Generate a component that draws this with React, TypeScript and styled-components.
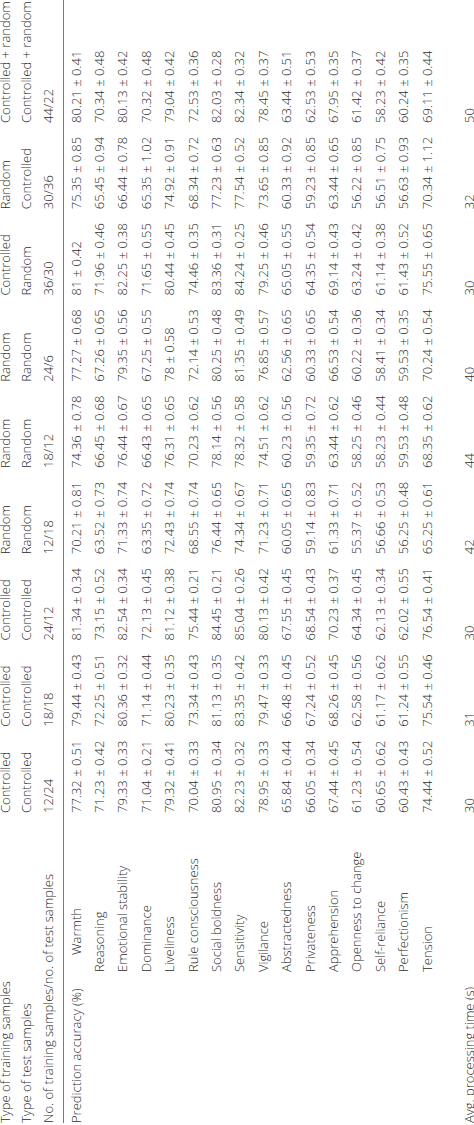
import React from "react";
import styled, { createGlobalStyle } from "styled-components";

const Global = createGlobalStyle`
  html, body { margin: 0; padding: 0; background: #ffffff; }
  #root { width: 474px; height: 1125px; }
`;

const Stage = styled.div`
  position: relative;
  width: 474px;
  height: 1125px;
  overflow: hidden;
  background: #ffffff;
`;

/* The table is printed sideways: the sheet is laid out normally, then turned a quarter left. */
const Sheet = styled.div`
  position: absolute;
  left: 0;
  top: 0;
  width: 1240px;
  transform-origin: 0 0;
  transform: translate(-6px, 1125px) rotate(-90deg);
  padding-left: 2px;
  font-family: "Open Sans", "Liberation Sans", sans-serif;
  font-weight: 300;
  font-size: 13px;
  color: #2b2b2b;
  white-space: nowrap;
`;

const COLS = "151px 159px repeat(9, 86.25px)";

const HeadRow = styled.div`
  display: grid;
  grid-template-columns: ${COLS};
  height: 21.5px;
  align-items: center;
`;

const HeadBlock = styled.div`
  padding-bottom: 4.5px;
  border-bottom: 1px solid #7a7a7a;
`;

const BodyRow = styled.div<{ $gap?: number }>`
  display: grid;
  grid-template-columns: ${COLS};
  height: 23.4px;
  align-items: center;
  margin-top: ${(p) => p.$gap ?? 0}px;
`;

const Span = styled.div`
  grid-column: 1 / span 2;
`;

const Group = styled.div``;

const Trait = styled.div<{ $shift?: number }>`
  padding-left: ${(p) => p.$shift ?? 0}px;
`;

const Cell = styled.div``;

type Col = { train: string; test: string; n: string; vals: string[]; time: string };

const raw: [string, string, string, string, string][] = [
  ["Controlled", "Controlled", "12/24", "77.32 0.51|71.23 0.42|79.33 0.33|71.04 0.21|79.32 0.41|70.04 0.33|80.95 0.34|82.23 0.32|78.95 0.33|65.84 0.44|66.05 0.34|67.44 0.45|61.23 0.54|60.65 0.62|60.43 0.43|74.44 0.52", "30"],
  ["Controlled", "Controlled", "18/18", "79.44 0.43|72.25 0.51|80.36 0.32|71.14 0.44|80.23 0.35|73.34 0.43|81.13 0.35|83.35 0.42|79.47 0.33|66.48 0.45|67.24 0.52|68.26 0.45|62.58 0.56|61.17 0.62|61.24 0.55|75.54 0.46", "31"],
  ["Controlled", "Controlled", "24/12", "81.34 0.34|73.15 0.52|82.54 0.34|72.13 0.45|81.12 0.38|75.44 0.21|84.45 0.21|85.04 0.26|80.13 0.42|67.55 0.45|68.54 0.43|70.23 0.37|64.34 0.45|62.13 0.34|62.02 0.55|76.54 0.41", "30"],
  ["Random", "Random", "12/18", "70.21 0.81|63.52 0.73|71.33 0.74|63.35 0.72|72.43 0.74|68.55 0.74|76.44 0.65|74.34 0.67|71.23 0.71|60.05 0.65|59.14 0.83|61.33 0.71|55.37 0.52|56.66 0.53|56.25 0.48|65.25 0.61", "42"],
  ["Random", "Random", "18/12", "74.36 0.78|66.45 0.68|76.44 0.67|66.43 0.65|76.31 0.65|70.23 0.62|78.14 0.56|78.32 0.58|74.51 0.62|60.23 0.56|59.35 0.72|63.44 0.62|58.25 0.46|58.23 0.44|59.53 0.48|68.35 0.62", "44"],
  ["Random", "Random", "24/6", "77.27 0.68|67.26 0.65|79.35 0.56|67.25 0.55|78 0.58|72.14 0.53|80.25 0.48|81.35 0.49|76.85 0.57|62.56 0.65|60.33 0.65|66.53 0.54|60.22 0.36|58.41 0.34|59.53 0.35|70.24 0.54", "40"],
  ["Controlled", "Random", "36/30", "81 0.42|71.96 0.46|82.25 0.38|71.65 0.55|80.44 0.45|74.46 0.35|83.36 0.31|84.24 0.25|79.25 0.46|65.05 0.55|64.35 0.54|69.14 0.43|63.24 0.42|61.14 0.38|61.43 0.52|75.55 0.65", "30"],
  ["Random", "Controlled", "30/36", "75.35 0.85|65.45 0.94|66.44 0.78|65.35 1.02|74.92 0.91|68.34 0.72|77.23 0.63|77.54 0.52|73.65 0.85|60.33 0.92|59.23 0.85|63.44 0.65|56.22 0.85|56.51 0.75|56.63 0.93|70.34 1.12", "32"],
  ["Controlled + random", "Controlled + random", "44/22", "80.21 0.41|70.34 0.48|80.13 0.42|70.32 0.48|79.04 0.42|72.53 0.36|82.03 0.28|82.34 0.32|78.45 0.37|63.44 0.51|62.53 0.53|67.95 0.35|61.42 0.37|58.23 0.42|60.24 0.35|69.11 0.44", "50"],
];

const columns: Col[] = raw.map(([train, test, n, v, time]) => ({
  train,
  test,
  n,
  time,
  vals: v.split("|").map((s) => {
    const [m, sd] = s.split(" ");
    return `${m} ± ${sd}`;
  }),
}));

const traits = [
  "Warmth",
  "Reasoning",
  "Emotional stability",
  "Dominance",
  "Liveliness",
  "Rule consciousness",
  "Social boldness",
  "Sensitivity",
  "Vigilance",
  "Abstractedness",
  "Privateness",
  "Apprehension",
  "Openness to change",
  "Self-reliance",
  "Perfectionism",
  "Tension",
];

export default function App() {
  return (
    <>
      <Global />
      <Stage>
        <Sheet>
          <HeadBlock>
            <HeadRow>
              <Span>Type of training samples</Span>
              {columns.map((c, i) => (
                <Cell key={i}>{c.train}</Cell>
              ))}
            </HeadRow>
            <HeadRow>
              <Span>Type of test samples</Span>
              {columns.map((c, i) => (
                <Cell key={i}>{c.test}</Cell>
              ))}
            </HeadRow>
            <HeadRow>
              <Span>No. of training samples/no. of test samples</Span>
              {columns.map((c, i) => (
                <Cell key={i}>{c.n}</Cell>
              ))}
            </HeadRow>
          </HeadBlock>
          {traits.map((t, r) => (
            <BodyRow key={t}>
              <Group>{r === 0 ? "Prediction accuracy (%)" : ""}</Group>
              <Trait $shift={r === 0 ? 17 : 0}>{t}</Trait>
              {columns.map((c, i) => (
                <Cell key={i}>{c.vals[r]}</Cell>
              ))}
            </BodyRow>
          ))}
          <BodyRow $gap={19}>
            <Span>Avg. processing time (s)</Span>
            {columns.map((c, i) => (
              <Cell key={i}>{c.time}</Cell>
            ))}
          </BodyRow>
        </Sheet>
      </Stage>
    </>
  );
}
